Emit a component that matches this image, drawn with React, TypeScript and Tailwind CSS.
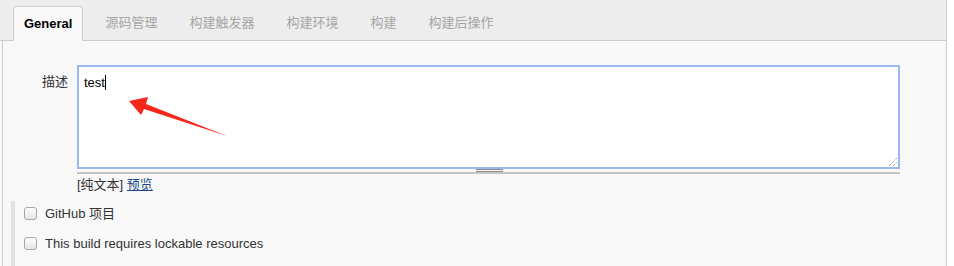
import React from "react";

const font = { fontFamily: '"Liberation Sans", Arial, "Noto Sans CJK SC", sans-serif' };

function Checkbox() {
  return (
    <span className="inline-block w-[13px] h-[13px] rounded-[3px] border border-[#a6a6a6] bg-gradient-to-b from-[#fdfdfd] to-[#e6e6e6] shrink-0" />
  );
}

export default function App() {
  const tabs = ["源码管理", "构建触发器", "构建环境", "构建", "构建后操作"];
  return (
    <div className="w-[954px] h-[266px] bg-white flex overflow-hidden text-[13px] text-[#333]" style={font}>
      <div className="w-[947px] h-full bg-[#f8f8f8] border-r border-[#cfcfcf] flex flex-col">
        {/* tab bar */}
        <div className="h-[41px] bg-[#ededed] border-b border-[#cccccc] flex items-end pl-[13px] shrink-0">
          <div className="h-[35px] -mb-px px-[10px] flex items-center rounded-t-[4px] border border-b-0 border-[#cccccc] bg-[#f8f8f8] text-black font-semibold mr-[6px]">
            General
          </div>
          {tabs.map((t) => (
            <div key={t} className="h-[35px] px-[16px] flex items-center text-[#a6a6a6]">
              {t}
            </div>
          ))}
        </div>
        {/* content */}
        <div className="flex-1 ml-[2px] border-l border-[#cccccc] relative">
          <div className="flex pt-[24px]">
            <div className="w-[65px] text-right pt-[7px]">描述</div>
            <div className="ml-[9px] flex flex-col">
              <div className="w-[823px] h-[104px] border-2 border-[#9ab8f2] bg-white px-[5px] pt-[6px] relative">
                <span className="text-black">test</span>
                <span className="inline-block w-px h-[15px] bg-black align-[-3px]" />
                <svg className="absolute right-[1px] bottom-[1px]" width="9" height="9" viewBox="0 0 9 9">
                  <line x1="1" y1="9" x2="9" y2="1" stroke="#777" strokeWidth="1" strokeDasharray="1 1" />
                  <line x1="5" y1="9" x2="9" y2="5" stroke="#777" strokeWidth="1" strokeDasharray="1 1" />
                </svg>
              </div>
              <div className="w-[823px] h-[5px] border-b-2 border-[#c4c4c4] flex justify-center">
                <div className="w-[27px] h-[3px] border-y border-[#8a8a8a] ml-[2px]" />
              </div>
              <div className="mt-[3px] leading-[16px]">
                [纯文本] <span className="underline text-[#204a87]">预览</span>
              </div>
            </div>
          </div>
          <div className="ml-[8px] mt-[8px] border-l-4 border-[#e2e2e2] h-[80px] pl-[9px] pt-[4px] flex flex-col gap-[13px]">
            <label className="flex items-center gap-[8px] h-[17px]">
              <Checkbox />
              <span>GitHub 项目</span>
            </label>
            <label className="flex items-center gap-[8px] h-[17px]">
              <Checkbox />
              <span>This build requires lockable resources</span>
            </label>
          </div>
          <svg className="absolute pointer-events-none" width="300" height="200" style={{ left: -3, top: -41 }}>
            <polygon points="129,101 148,97 146,104 227,136 144,109 141,115" fill="#f5271d" />
          </svg>
        </div>
      </div>
    </div>
  );
}
